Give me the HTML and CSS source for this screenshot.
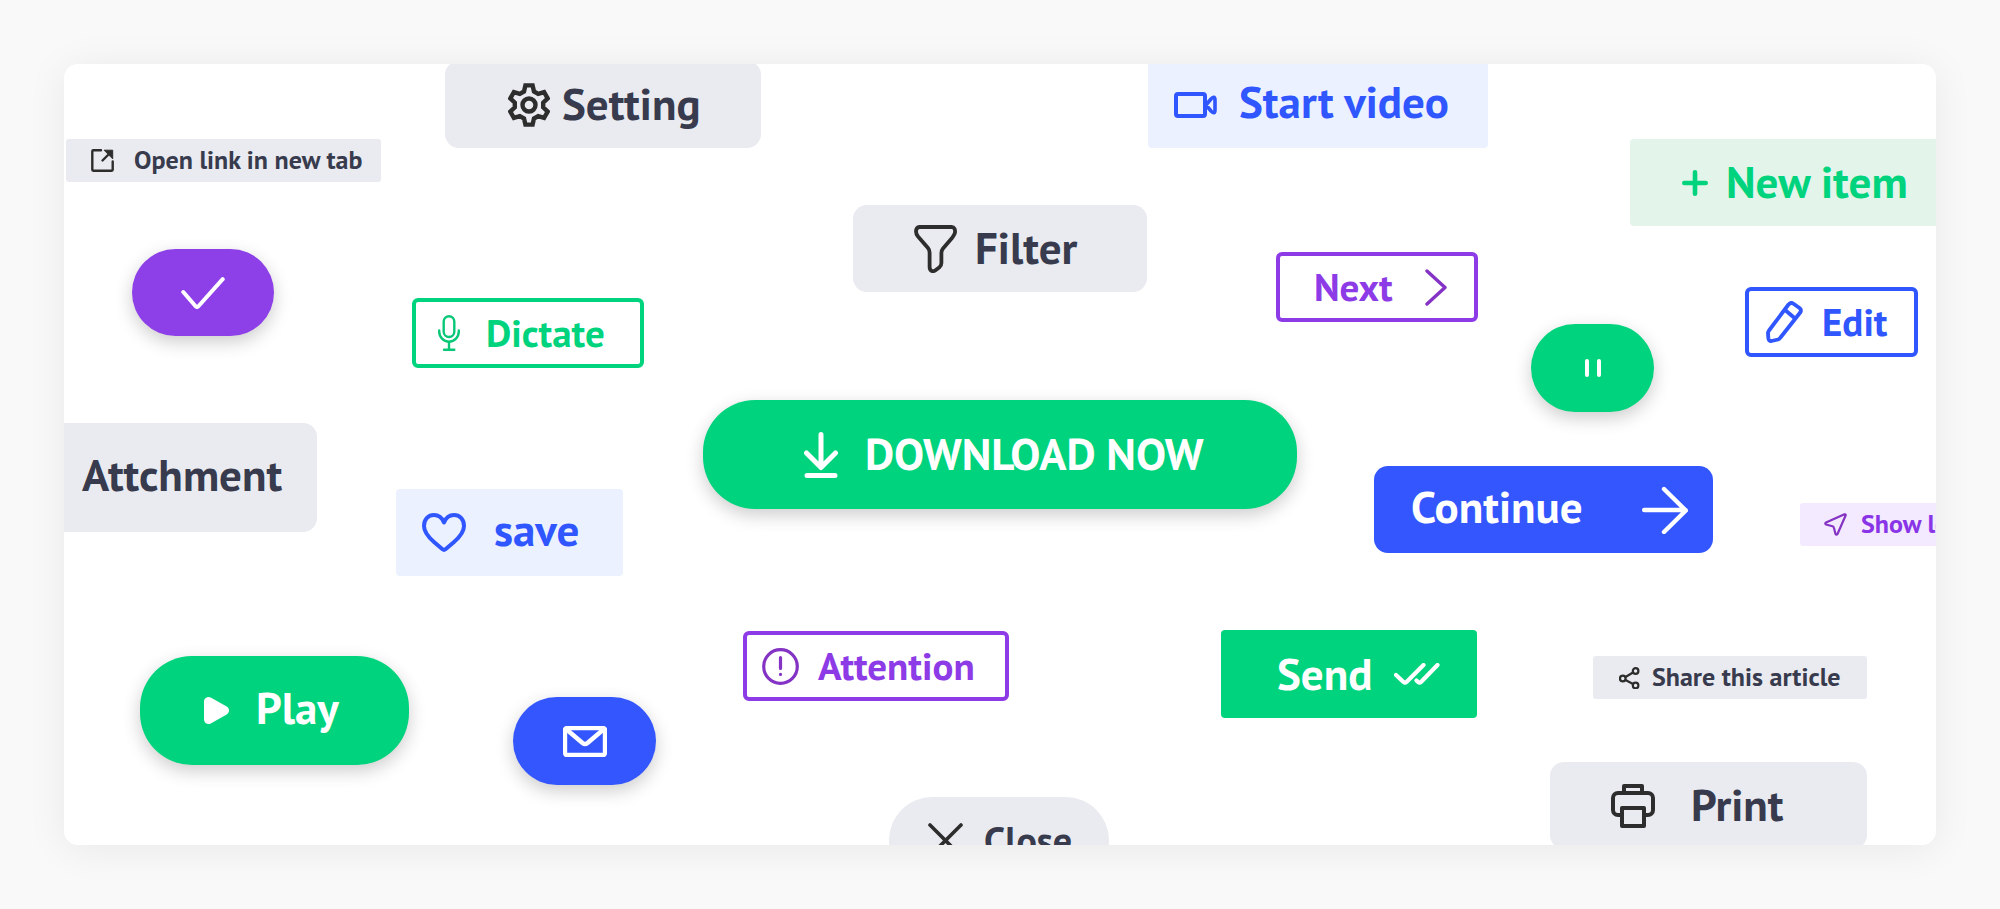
FILE: index.html
```html
<!DOCTYPE html>
<html lang="en">
<head>
<meta charset="utf-8">
<meta name="viewport" content="width=device-width, initial-scale=1">
<title>Buttons</title>
<link rel="stylesheet" href="styles.css">
</head>
<body>
<main class="board">

  <button class="btn neutral rounded setting" type="button">
    <svg class="icon ink" width="42" height="44" viewBox="-21 -22 42 44" stroke-width="4.4" aria-hidden="true"><path d="M-3.6-19.6L3.6-19.6L5-13.5L9.2-11.1L15.1-12.9L18.7-6.6L14.2-2.4L14.2 2.4L18.7 6.6L15.1 12.9L9.2 11.1L5 13.5L3.6 19.6L-3.6 19.6L-5 13.5L-9.2 11.1L-15.1 12.9L-18.7 6.6L-14.2 2.4L-14.2-2.4L-18.7-6.6L-15.1-12.9L-9.2-11.1L-5-13.5Z" stroke-linejoin="miter"/><circle r="6.5"/></svg>
    <span class="label">Setting</span>
  </button>

  <button class="btn blue-soft start-video" type="button">
    <svg class="icon" width="43" height="26" viewBox="0 0 43 26" stroke-width="4" aria-hidden="true"><rect x="2" y="2" width="29" height="22" rx="2"/><path d="M32 13L37 7Q41 3 41 8V18Q41 23 37 19Z" stroke-width="3.6"/></svg>
    <span class="label raised">Start video</span>
  </button>

  <a class="btn neutral small open-link" href="#">
    <svg class="icon ink" width="23" height="23" viewBox="0 0 23 23" stroke-width="2.4" aria-hidden="true"><path d="M10 1.3H2.2Q1.3 1.3 1.3 2.2V20.8Q1.3 21.7 2.2 21.7H20.8Q21.7 21.7 21.7 20.8V12.5"/><path d="M11.5 11.5L17 6"/><path d="M13.5 1.2H21.7V9.5Z" fill="currentColor" stroke-width="1"/></svg>
    <span class="label">Open link in new tab</span>
  </a>

  <button class="btn green-soft new-item" type="button">
    <svg class="icon" width="26" height="26" viewBox="0 0 26 26" stroke-width="4.6" aria-hidden="true"><path d="M13 2.3V23.7M2.3 13H23.7"/></svg>
    <span class="label">New item</span>
  </button>

  <button class="btn purple pill done" type="button" aria-label="Done">
    <svg class="icon" width="44" height="32" viewBox="0 0 44 32" stroke-width="4" aria-hidden="true"><path d="M2.3 15L14.8 29.5Q16 30.5 17.2 29.5L41.7 2.2"/></svg>
  </button>

  <button class="btn neutral rounded filter" type="button">
    <svg class="icon ink" width="43" height="48" viewBox="0 0 43 48" stroke-width="3.8" aria-hidden="true"><path d="M5.5 2H37.5C40.5 2 41.3 4.5 41 7.5C40.8 9.5 39.5 11 38 13L29 23.5Q27.4 25.5 27.4 28V38Q27.4 40.5 25.5 42.2L21.5 45.2C18.5 47.5 15.6 45.5 15.6 42V27.5Q15.6 25 14 23L4 11.5Q2 9 2 6.5Q2 2 5.5 2Z"/></svg>
    <span class="label">Filter</span>
  </button>

  <button class="btn purple-line medium next" type="button">
    <span class="label">Next</span>
    <svg class="icon violet" width="22" height="37" viewBox="0 0 22 37" stroke-width="3.4" aria-hidden="true"><path d="M2 2L20 18.5L2 35"/></svg>
  </button>

  <button class="btn green-line medium dictate" type="button">
    <svg class="icon mint" width="22" height="36" viewBox="0 0 22 36" stroke-width="2.4" aria-hidden="true"><rect x="5.7" y="1.2" width="10.6" height="20.8" rx="5.3"/><path d="M1.2 15.5V16.5C1.2 22 5.5 26.6 11 26.6S20.8 22 20.8 16.5V15.5M11 26.6V34.8M6 34.8H16.3"/></svg>
    <span class="label">Dictate</span>
  </button>

  <button class="btn blue-line medium edit" type="button">
    <svg class="icon" width="37" height="42" viewBox="0 0 37 42" stroke-width="3.8" aria-hidden="true"><path d="M22.5 3.5Q25 .8 27.5 2.7L33.5 7Q36 9 34 11.8L14.5 36.5Q13.5 38 12 38.5L5.500 40Q2.8 40.2 2.4 37.5L2 32.5Q2 31 3 29.5ZM19.7 9.5L28.5 17"/></svg>
    <span class="label">Edit</span>
  </button>

  <button class="btn green pill pause" type="button" aria-label="Pause">
    <svg class="icon" width="16" height="18" viewBox="0 0 16 18" stroke-width="4" aria-hidden="true"><path d="M2 2V16M14 2V16"/></svg>
  </button>

  <button class="btn neutral rounded large attachment" type="button">
    <span class="label raised">Attchment</span>
  </button>

  <button class="btn blue-soft save" type="button">
    <svg class="icon" width="44" height="39" viewBox="0 0 44 39" stroke-width="4" aria-hidden="true"><path d="M22 9.5C20 4.5 16 2 12 2C6.5 2 2 6 2 13C2 20 8 25.5 12 29L20.5 36.3Q22 37.5 23.5 36.3L32 29C36 25.5 42 20 42 13C42 6 37.5 2 32 2C28 2 24 4.5 22 9.5Z"/></svg>
    <span class="label raised">save</span>
  </button>

  <button class="btn green pill large download" type="button">
    <svg class="icon" width="34" height="46" viewBox="0 0 34 46" stroke-width="5" aria-hidden="true"><path d="M17 2.5V35M2.5 21L17 35.5L31.5 21M3 43.5H31"/></svg>
    <span class="label">DOWNLOAD NOW</span>
  </button>

  <button class="btn blue rounded continue" type="button">
    <span class="label raised">Continue</span>
    <svg class="icon" width="46" height="48" viewBox="0 0 46 48" stroke-width="4.4" aria-hidden="true"><path d="M2.2 24H43.5M22 3L43.8 24.5L22 46"/></svg>
  </button>

  <button class="btn purple-soft small show-location" type="button">
    <svg class="icon violet" width="23" height="23" viewBox="0 0 23 23" stroke-width="2.2" aria-hidden="true"><path d="M20.5 1.3L2 9.5Q.5 10.6 2 11.5L8.5 13.2Q9.6 13.5 9.9 14.8L11.5 21Q12.3 22.5 13.5 21L21.7 2.3Q21.8 1 20.5 1.3Z"/></svg>
    <span class="label">Show location</span>
  </button>

  <button class="btn green pill large play" type="button">
    <svg class="icon" width="25" height="29" viewBox="0 0 25 29" stroke-width="9" aria-hidden="true"><path d="M4.5 5.5V23.5L20.5 14.5Z" fill="currentColor"/></svg>
    <span class="label raised">Play</span>
  </button>

  <button class="btn blue pill mail" type="button" aria-label="Mail">
    <svg class="icon" width="44" height="31" viewBox="0 0 44 31" stroke-width="4.4" aria-hidden="true"><rect x="2" y="2" width="40" height="27" rx="2"/><path d="M3 3L19.5 17Q22 19 24.5 17L41 3"/></svg>
  </button>

  <button class="btn purple-line medium attention" type="button">
    <svg class="icon violet" width="37" height="37" viewBox="0 0 37 37" stroke-width="3.2" aria-hidden="true"><circle cx="18.5" cy="18.5" r="16.8"/><path d="M18.5 9.5V20.5M18.5 26.3V26.4"/></svg>
    <span class="label">Attention</span>
  </button>

  <button class="btn green send" type="button">
    <span class="label">Send</span>
    <svg class="icon" width="46" height="22" viewBox="0 0 46 22" stroke-width="4.2" aria-hidden="true"><path d="M2 12L9.5 19Q11 20.3 12.5 19L29.5 2M22.5 17.5L24 19Q25.5 20.3 27 19L43.5 2"/></svg>
  </button>

  <button class="btn neutral small share" type="button">
    <svg class="icon ink" width="21" height="22" viewBox="0 0 21 22" stroke-width="2.2" aria-hidden="true"><circle cx="3.8" cy="11.5" r="2.8"/><circle cx="16.6" cy="4" r="2.8"/><circle cx="16.6" cy="18.5" r="2.8"/><path d="M6.5 10L14 5.5M6.5 13L14 17"/></svg>
    <span class="label">Share this article</span>
  </button>

  <button class="btn neutral rounded print" type="button">
    <svg class="icon ink" width="44" height="44" viewBox="0 0 44 44" stroke-width="4" aria-hidden="true"><path d="M13 9V2H31V9M11 31H7A5 5 0 0 1 2 26V14A5 5 0 0 1 7 9H37A5 5 0 0 1 42 14V26A5 5 0 0 1 37 31H33"/><rect x="11" y="24" width="22" height="18"/></svg>
    <span class="label">Print</span>
  </button>

  <button class="btn neutral pill-flat close" type="button">
    <svg class="icon ink" width="35" height="35" viewBox="0 0 35 35" stroke-width="3.6" aria-hidden="true"><path d="M2 2L33 33M33 2L2 33"/></svg>
    <span class="label">Close</span>
  </button>

</main>
</body>
</html>
```
FILE: styles.css
```css
* {
  box-sizing: border-box;
}

body {
  margin: 0;
  min-height: 100vh;
  padding: 64px;
  display: flex;
  background: #f9f9f9;
  font-family: "PT Sans", "Noto Sans", sans-serif;
}

/* Free canvas on which the buttons are scattered; the edges clip them. */
.board {
  position: relative;
  flex: 1;
  min-height: 780px;
  overflow: hidden;
  background: #fff;
  border-radius: 14px;
  box-shadow: 0 4px 40px rgba(0, 0, 0, 0.07);
}

.btn {
  position: absolute;
  display: flex;
  align-items: center;
  height: 87px;
  margin: 0;
  padding: 0;
  border: 0;
  border-radius: 4px;
  font-family: inherit;
  font-size: 45px;
  font-weight: 700;
  line-height: 1;
  text-decoration: none;
  white-space: nowrap;
  cursor: pointer;
}

.label {
  padding-bottom: 2px;
}

.label.raised {
  padding-bottom: 6px;
}

.icon {
  flex: none;
  fill: none;
  stroke: currentColor;
  stroke-linecap: round;
  stroke-linejoin: round;
}

.ink { color: #2d2d2d; }
.violet { color: #8433c4; }
.mint { color: #08c878; }

/* Sizes */
.large { height: 109px; }
.medium { height: 70px; font-size: 39px; border: 4px solid; border-radius: 6px; }
.small { height: 43px; font-size: 26px; border-radius: 3px; }
.small .label { padding-bottom: 1px; }

/* Shapes */
.rounded { border-radius: 14px; }
.pill,
.pill-flat { border-radius: 44px; }
.pill { box-shadow: 0 6px 18px rgba(0, 0, 0, 0.2); }
.pill.large { border-radius: 52px; }
.done, .pause, .mail { justify-content: center; }

/* Colours */
.neutral { background: #eaebf0; color: #373b4d; }
.green { background: #00d37d; color: #fff; }
.blue { background: #3356ff; color: #fff; }
.purple { background: #8d40e8; color: #fff; }
.blue-soft { background: #ebf1ff; color: #3056ff; }
.green-soft { background: #e3f4ea; color: #00d37d; }
.purple-soft { background: #f3eaff; color: #8934e6; }
.green-line { background: #fff; color: #00d37d; }
.blue-line { background: #fff; color: #3056ff; }
.purple-line { background: #fff; color: #8d3be6; }

/* Places on the canvas */
.setting { left: 381px; top: -3px; width: 316px; padding-left: 63px; gap: 12px; }
.start-video { right: 448px; top: -3px; width: 340px; padding-left: 26px; gap: 22px; }
.open-link { left: 2px; top: 75px; width: 315px; padding-left: 25px; gap: 20px; }
.new-item { right: -40px; top: 75px; width: 346px; padding-left: 52px; gap: 18px; }
.done { left: 68px; top: 185px; width: 142px; }
.filter { left: calc(50% - 147px); top: 141px; width: 294px; padding-left: 61px; gap: 18px; }
.next { right: 458px; top: 188px; width: 202px; padding-left: 34px; gap: 32px; }
.dictate { left: 348px; top: 234px; width: 232px; padding-left: 22px; gap: 26px; }
.edit { right: 18px; top: 223px; width: 173px; padding-left: 17px; gap: 19px; }
.pause { right: 282px; top: 260px; width: 123px; height: 88px; }
.attachment { left: -60px; top: 359px; width: 313px; padding-left: 78px; }
.save { left: 332px; top: 425px; width: 227px; padding-left: 26px; gap: 28px; }
.download { left: calc(50% - 297px); top: 336px; width: 594px; padding-left: 101px; gap: 27px; }
.continue { right: 223px; top: 402px; width: 339px; padding-left: 37px; gap: 59px; }
.show-location { right: -80px; top: 439px; width: 216px; padding-left: 24px; gap: 14px; }
.play { left: 76px; top: 592px; width: 269px; padding-left: 64px; gap: 27px; }
.mail { left: 449px; top: 633px; width: 143px; height: 88px; }
.attention { left: calc(50% - 257px); top: 567px; width: 266px; padding-left: 15px; gap: 19px; }
.send { right: 459px; top: 566px; width: 256px; height: 88px; padding-left: 56px; gap: 21px; }
.share { right: 69px; top: 592px; width: 274px; padding-left: 26px; gap: 12px; }
.print { right: 69px; top: 698px; width: 317px; padding-left: 61px; gap: 36px; }
.close { left: calc(50% - 111px); top: 733px; width: 220px; padding-left: 39px; gap: 21px; font-size: 38px; }
```
